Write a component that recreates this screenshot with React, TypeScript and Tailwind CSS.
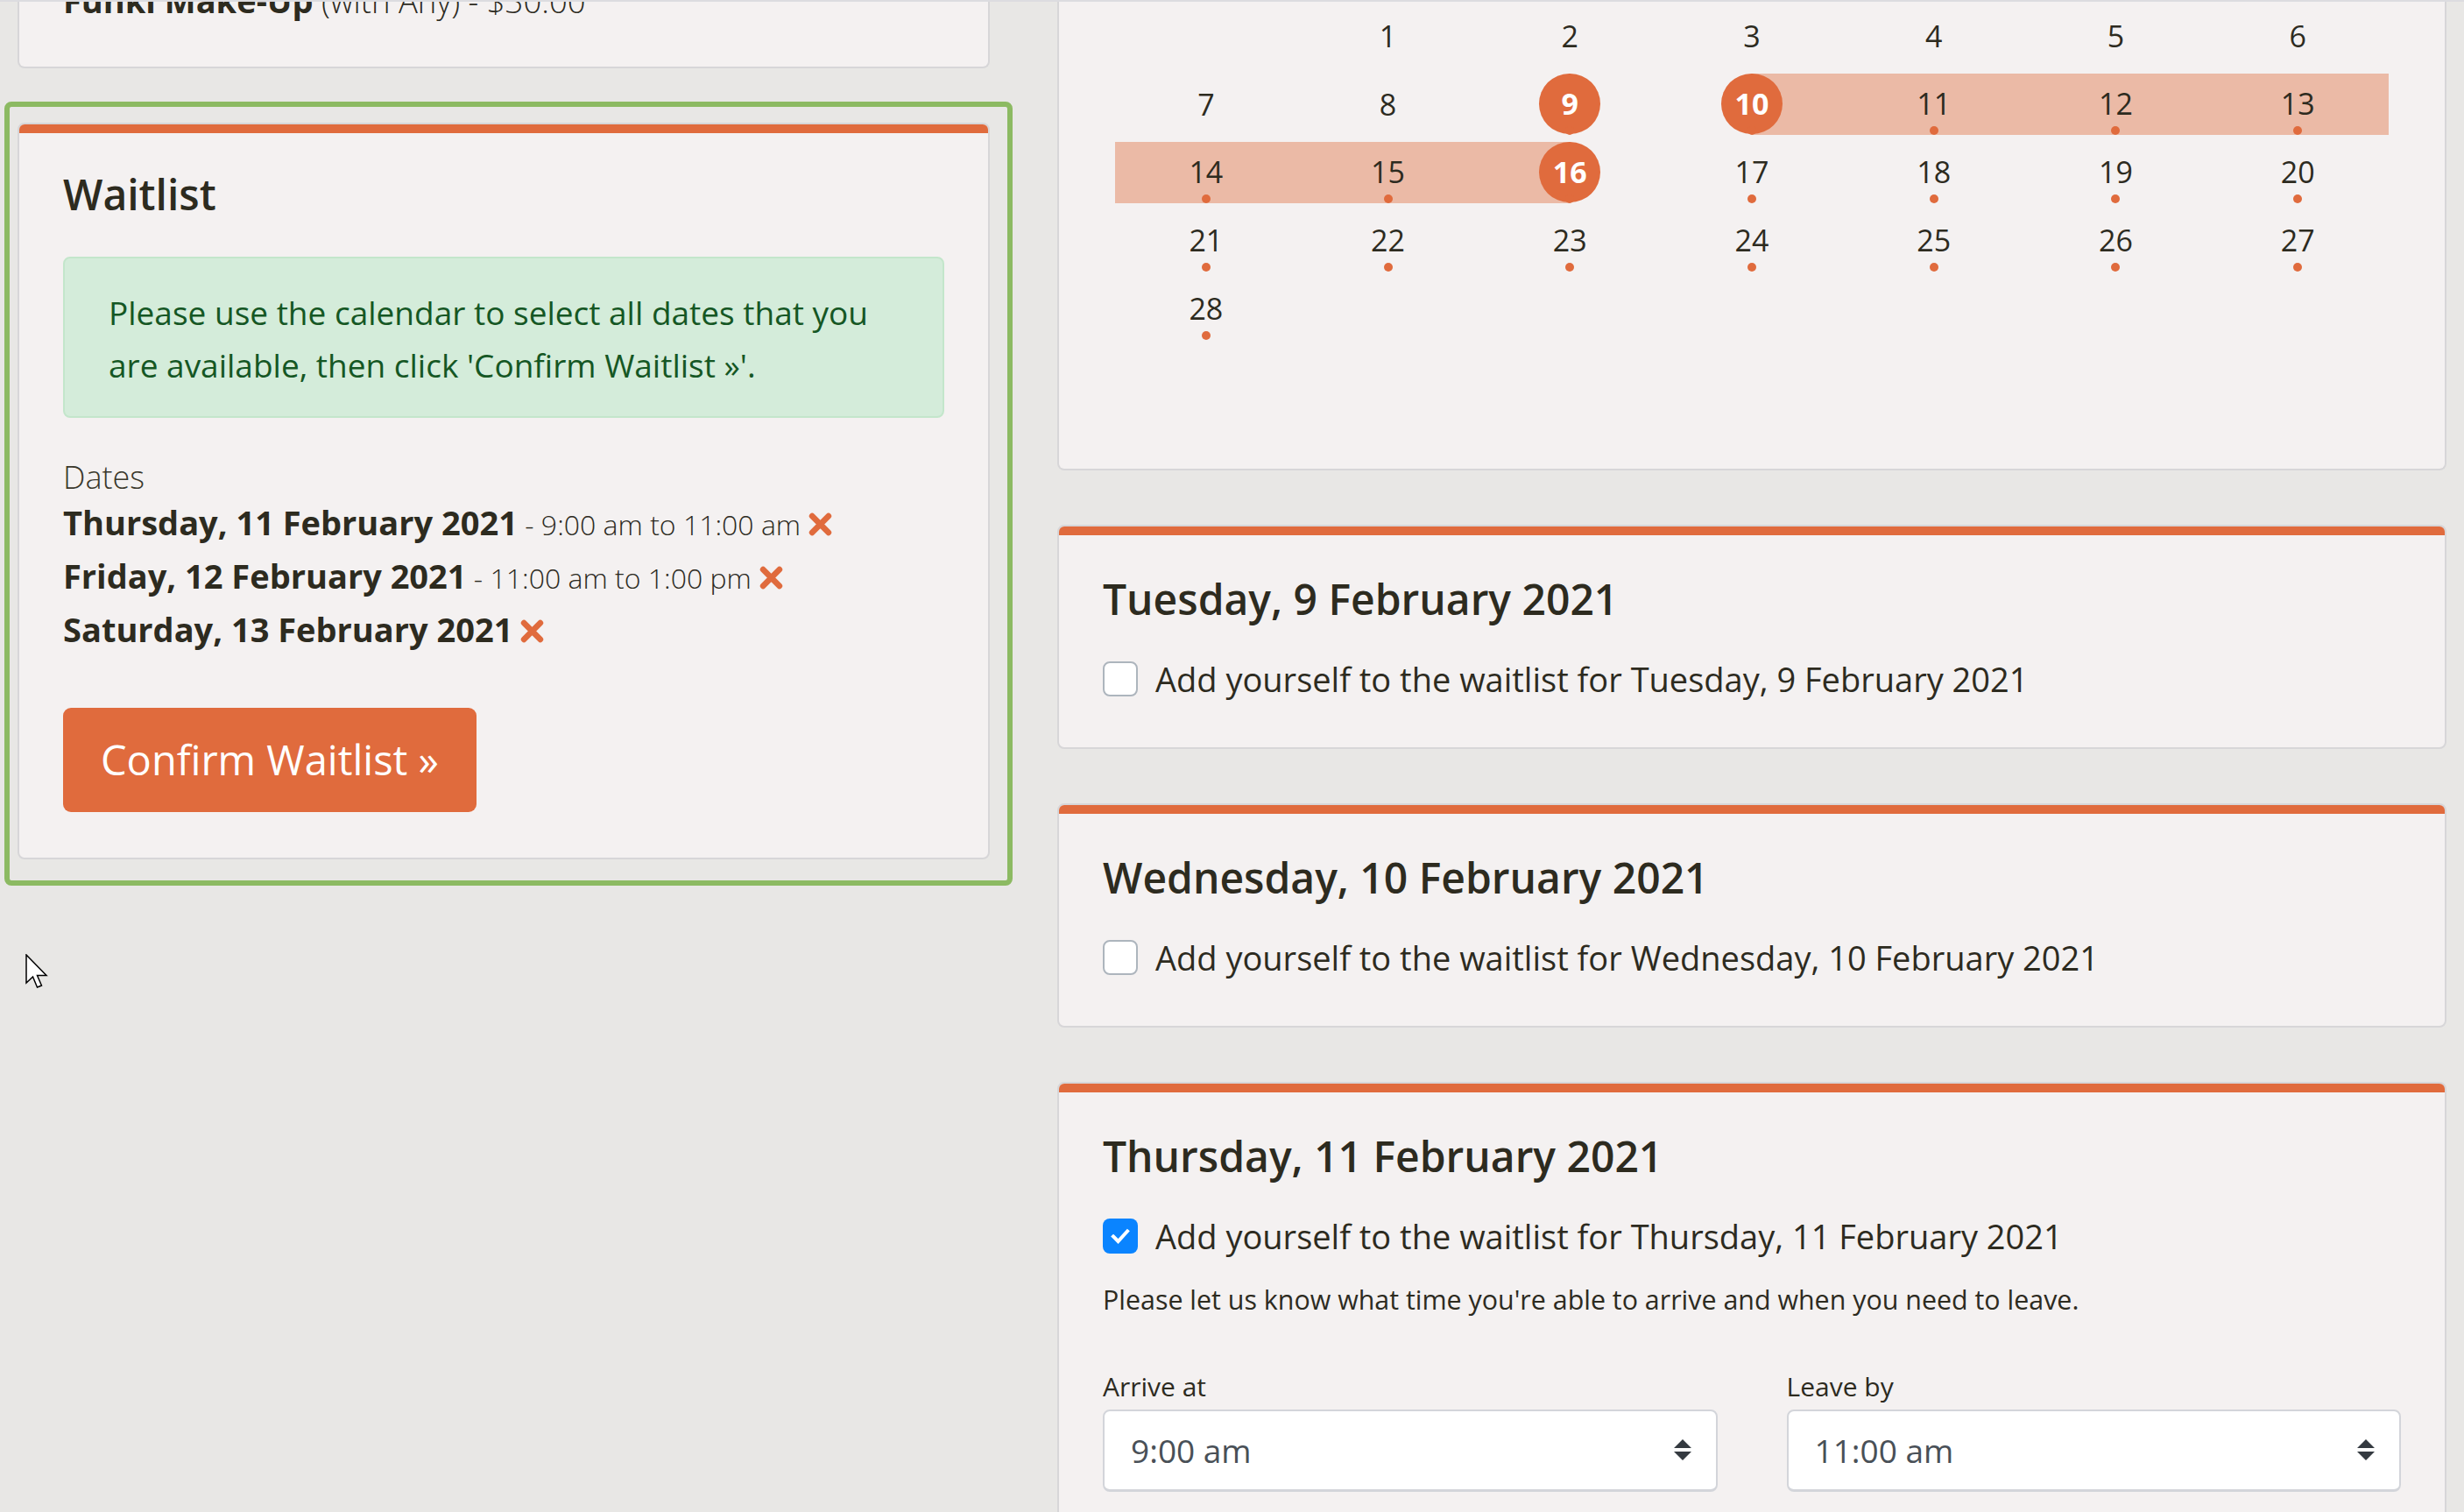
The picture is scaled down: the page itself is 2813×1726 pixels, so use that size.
import React from 'react';

const ORANGE = '#e06b3d';

const XIcon = () => (
  <svg width="29" height="29" viewBox="0 0 28 28" className="inline-block ml-[8px] -mt-[5px] align-middle">
    <path d="M5 5 L23 23 M23 5 L5 23" stroke={ORANGE} strokeWidth="6.5" strokeLinecap="round" />
  </svg>
);

const Checkbox = ({ checked }: { checked?: boolean }) =>
  checked ? (
    <div className="w-[40px] h-[40px] rounded-[8px] bg-[#0a84ff] flex items-center justify-center shrink-0">
      <svg width="22" height="22" viewBox="0 0 22 22">
        <path d="M3 11.5 L8.5 17 L19 5.5" stroke="white" strokeWidth="4" fill="none" strokeLinecap="square" />
      </svg>
    </div>
  ) : (
    <div className="w-[40px] h-[40px] rounded-[8px] bg-white border-2 border-[#adb5bd] shrink-0" />
  );

const SelectBox = ({ value }: { value: string }) => (
  <div className="h-[94px] bg-white border-2 border-[#d3d5da] border-b-[3px] rounded-[8px] flex items-center justify-between pl-[30px] pr-[28px] text-[37px] text-[#495057]">
    <span>{value}</span>
    <svg width="20" height="26" viewBox="0 0 20 26">
      <path d="M10 0 L20 10 L0 10 Z M0 14 L20 14 L10 24 Z" fill="#343a40" />
    </svg>
  </div>
);

const rows: (number | null)[][] = [
  [null, 1, 2, 3, 4, 5, 6],
  [7, 8, 9, 10, 11, 12, 13],
  [14, 15, 16, 17, 18, 19, 20],
  [21, 22, 23, 24, 25, 26, 27],
  [28, null, null, null, null, null, null],
];

const bandClass = (d: number | null) => {
  if (d === 10) return 'bg-[linear-gradient(to_right,transparent_50%,#ebbaa6_50%)]';
  if (d === 16) return 'bg-[linear-gradient(to_left,transparent_50%,#ebbaa6_50%)]';
  if (d !== null && d > 10 && d < 16) return 'bg-[#ebbaa6]';
  return '';
};

const DayCell = ({ d }: { d: number | null }) => {
  const selected = d === 9 || d === 10 || d === 16;
  return (
    <div className={`h-[70px] flex flex-col items-center ${bandClass(d)}`}>
      {d !== null && (
        <>
          {selected ? (
            <div className="w-[70px] h-[70px] rounded-full bg-[#e06b3d] text-white font-bold text-[34px] flex items-center justify-center">
              {d}
            </div>
          ) : (
            <div className="h-[70px] flex items-center text-[34px]">{d}</div>
          )}
          {d >= 9 && <div className="w-[10px] h-[10px] rounded-full bg-[#e06b3d] -mt-[9px]" />}
        </>
      )}
    </div>
  );
};

const DateCard = ({ title, checked, children }: { title: string; checked?: boolean; children?: React.ReactNode }) => (
  <div className="border-2 border-[#d7d6d8] rounded-[8px] overflow-hidden bg-[#f4f1f1]">
    <div className="h-[10px] bg-[#e06b3d]" />
    <div className="px-[50px] pt-[44px] pb-[48px]">
      <h4 className="text-[48px] leading-[58px] font-semibold">{title}</h4>
      <label className="mt-[32px] flex items-center gap-[20px] text-[38px] leading-[60px]">
        <Checkbox checked={checked} />
        <span>Add yourself to the waitlist for {title}</span>
      </label>
      {children}
    </div>
  </div>
);

export default function App() {
  return (
    <div className="h-[1726px] overflow-hidden bg-[#e8e7e5] border-t-2 border-[#dcdce0] font-['Open_Sans',sans-serif] text-[#2d2b1f]">
      <div className="flex pl-[5px]">
        {/* left column */}
        <div className="relative w-[1151px] shrink-0">
          <div className="ml-[15px] mr-[26px] -mt-[32px] pb-[45px] px-[50px] bg-[#f4f1f1] border-2 border-t-0 border-[#d7d6d8] rounded-b-[8px]">
            <div className="text-[38px] leading-[60px] whitespace-nowrap">
              <span className="font-bold">Funki Make-Up</span>
              <span className="font-light text-[36.5px]"> (with Any) - $30.00</span>
            </div>
          </div>

          <div className="mt-[38px] border-[6px] border-[#8cba62] rounded-[8px] pt-[18px] pl-[9px] pr-[20px] pb-[24px]">
            <div className="border-2 border-[#d7d6d8] rounded-[8px] overflow-hidden bg-[#f4f1f1]">
              <div className="h-[10px] bg-[#e06b3d]" />
              <div className="px-[50px] pt-[40px] pb-[52px]">
                <h3 className="text-[48px] leading-[60px] font-semibold">Waitlist</h3>
                <div className="mt-[41px] border-2 border-[#c3e6cb] bg-[#d4ecda] rounded-[8px] pl-[50px] pr-[40px] pt-[32px] pb-[28px] text-[37px] leading-[60px] text-[#155724]">
                  Please use the calendar to select all dates that you are available, then click 'Confirm Waitlist »'.
                </div>
                <div className="mt-[44px] text-[36px] leading-[48px] font-light text-[#3a382c]">Dates</div>
                <div className="-mt-[2px] text-[38px] leading-[59px] whitespace-nowrap">
                  <div>
                    <span className="font-bold">Thursday, 11 February 2021</span>
                    <span className="font-light text-[32px]"> - 9:00 am to 11:00 am</span>
                    <XIcon />
                  </div>
                  <div>
                    <span className="font-bold">Friday, 12 February 2021</span>
                    <span className="font-light text-[32px]"> - 11:00 am to 1:00 pm</span>
                    <XIcon />
                  </div>
                  <div>
                    <span className="font-bold">Saturday, 13 February 2021</span>
                    <XIcon />
                  </div>
                </div>
                <button className="mt-[60px] h-[119px] px-[43px] rounded-[9px] bg-[#e06b3d] text-white text-[47px] flex items-center">
                  Confirm Waitlist »
                </button>
              </div>
            </div>
          </div>

          {/* mouse pointer */}
          <svg className="absolute left-[24px] top-[1087px]" width="28" height="40" viewBox="0 0 28 40">
            <path d="M1 1 L1 33 L8.5 26 L13.5 38 L18.5 36 L13.5 24.5 L24 24.5 Z" fill="white" stroke="black" strokeWidth="1.5" strokeLinejoin="miter" />
          </svg>
        </div>

        {/* right column */}
        <div className="ml-[51px] w-[1586px] shrink-0 flex flex-col gap-[62px]">
          <div className="bg-[#f4f1f1] border-2 border-t-0 border-[#d7d6d8] rounded-b-[8px] px-[64px] pt-[4px] pb-[147px]">
            <div className="grid grid-cols-7 gap-y-[8px]">
              {rows.flat().map((d, i) => (
                <DayCell key={i} d={d} />
              ))}
            </div>
          </div>

          <DateCard title="Tuesday, 9 February 2021" />
          <DateCard title="Wednesday, 10 February 2021" />
          <DateCard title="Thursday, 11 February 2021" checked>
            <p className="mt-[22px] text-[30.4px] leading-[42px]">
              Please let us know what time you're able to arrive and when you need to leave.
            </p>
            <div className="mt-[57px] grid grid-cols-2 gap-x-[79px]">
              <div>
                <div className="text-[30px] leading-[42px]">Arrive at</div>
                <div className="mt-[5px]">
                  <SelectBox value="9:00 am" />
                </div>
              </div>
              <div>
                <div className="text-[30px] leading-[42px]">Leave by</div>
                <div className="mt-[5px]">
                  <SelectBox value="11:00 am" />
                </div>
              </div>
            </div>
          </DateCard>
        </div>
      </div>
    </div>
  );
}
